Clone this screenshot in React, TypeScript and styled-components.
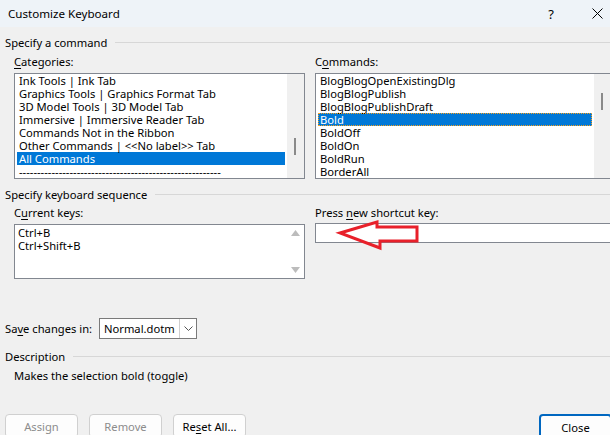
import React from "react";
import styled, {createGlobalStyle} from "styled-components";

const Global = createGlobalStyle`
html, body {
  margin: 0;
  padding: 0;
  background: #f0f0f0;
}
#root {
  width: 610px;
  height: 435px;
  overflow: hidden;
}
`

const Dialog = styled.div`
width: 620px;
height: 435px;
background: #f0f0f0;
font-family: "Noto Sans", "Segoe UI", sans-serif;
font-size: 11.2px;
color: #000;
display: flex;
flex-direction: column;
`

const TitleBar = styled.div`
height: 27px;
background: #eef3f8;
display: flex;
align-items: center;
padding: 0 0 0 8px;
font-size: 12px;
`
const Title = styled.div`
flex: 1;
line-height: 15px;
font-size: 11.6px;
`
const TitleButton = styled.div`
width: 46px;
height: 27px;
display: flex;
align-items: center;
justify-content: center;
font-size: 13px;
`

const Body = styled.div`
flex: 1;
padding: 0 8px 0 5px;
display: flex;
flex-direction: column;
`

const GroupHeader = styled.div<{top: number}>`
display: flex;
align-items: center;
gap: 8px;
margin-top: ${p => p.top}px;
line-height: 15px;
&::after{
  content: '';
  flex: 1;
  height: 1px;
  background: #d7d7d7;
}
`

const Columns = styled.div<{top: number}>`
display: grid;
grid-template-columns: 291px 1fr;
column-gap: 10px;
padding-left: 9px;
margin-top: ${p => p.top}px;
`
const Label = styled.div`
line-height: 15px;
height: 15px;
margin-bottom: 4px;
white-space: nowrap;
u{
  text-decoration-thickness: 1px;
  text-underline-offset: 2px;
}
`

const ListBox = styled.div`
position: relative;
height: 104px;
border: 1px solid #828790;
background: #fff;
display: flex;
overflow: hidden;
`
const ListItems = styled.div`
flex: 1;
padding: 0 2px;
overflow: hidden;
`
const Item = styled.div<{selected?: boolean}>`
height: 13px;
line-height: 13px;
padding-left: 2px;
white-space: nowrap;
background: ${p => p.selected ? '#0078d7' : 'transparent'};
color: ${p => p.selected ? '#fff' : '#000'};
`
const FocusItem = styled(Item)`
outline: 1px dotted #f7a01c;
outline-offset: -1px;
`
const ScrollGutter = styled.div`
width: 17px;
background: #f0f0f0;
position: relative;
`
const Thumb = styled.div<{from: number, size: number}>`
position: absolute;
left: 7px;
top: ${p => p.from}px;
width: 2px;
height: ${p => p.size}px;
background: #8a8a8a;
`

const KeysBox = styled.div`
height: 53px;
border: 1px solid #828790;
background: #fff;
display: flex;
`
const KeysText = styled.div`
flex: 1;
padding: 1px 3px;
line-height: 13px;
`
const ArrowGutter = styled.div`
width: 17px;
display: flex;
flex-direction: column;
justify-content: space-between;
align-items: center;
padding: 5px 0 5px;
`

const ShortcutWrap = styled.div`
position: relative;
margin-top: -1px;
`
const ShortcutInput = styled.div`
height: 18px;
border: 1px solid #828790;
background: #fff;
`
const Arrow = styled.svg`
position: absolute;
left: 0;
top: 0;
overflow: visible;
`

const SaveRow = styled.div`
display: flex;
align-items: center;
margin-top: 39px;
`
const SaveLabel = styled(Label)`
width: 94px;
margin-bottom: 0;
`
const Select = styled.div`
width: 96px;
height: 19px;
border: 1px solid #7a7a7a;
background: #fff;
display: flex;
`
const SelectValue = styled.div`
flex: 1;
padding-left: 4px;
line-height: 19px;
`
const SelectDrop = styled.div`
width: 16px;
border-left: 1px solid #cfcfcf;
display: flex;
align-items: center;
justify-content: center;
`

const Description = styled.div`
margin-top: 4px;
padding-left: 9px;
line-height: 15px;
`

const ButtonRow = styled.div`
display: flex;
gap: 11px;
margin-top: 31px;
`
const Button = styled.div<{disabled?: boolean, primary?: boolean}>`
width: ${p => p.primary ? 69 : 71}px;
height: 22px;
border: ${p => p.primary ? '2px solid #0067c0' : '1px solid #d0d0d0'};
border-radius: 4px;
background: #fdfdfd;
color: ${p => p.disabled ? '#8c8c8c' : '#000'};
display: flex;
align-items: center;
justify-content: center;
u{
  text-decoration-thickness: 1px;
  text-underline-offset: 2px;
}
`
const Spacer = styled.div`
flex: 1;
`

const categories = [
    'Ink Tools | Ink Tab',
    'Graphics Tools | Graphics Format Tab',
    '3D Model Tools | 3D Model Tab',
    'Immersive | Immersive Reader Tab',
    'Commands Not in the Ribbon',
    'Other Commands | <<No label>> Tab',
]

const commands = ['BlogBlogOpenExistingDlg', 'BlogBlogPublish', 'BlogBlogPublishDraft']
const commandsAfter = ['BoldOff', 'BoldOn', 'BoldRun', 'BorderAll']

const Triangle = ({up}: {up?: boolean}) =>
    <svg width="9" height="6" viewBox="0 0 9 6">
        <path d={up ? "M0 6 L4.5 0 L9 6 Z" : "M0 0 L4.5 6 L9 0 Z"} fill="#bcbcbc"/>
    </svg>

export default function App() {
    return <>
        <Global/>
        <Dialog>
            <TitleBar>
                <Title>Customize Keyboard</Title>
                <TitleButton>?</TitleButton>
                <TitleButton>
                    <svg width="11" height="11" viewBox="0 0 11 11">
                        <path d="M0.5 0.5 L10.5 10.5 M10.5 0.5 L0.5 10.5" stroke="#000" strokeWidth="1"/>
                    </svg>
                </TitleButton>
            </TitleBar>
            <Body>
                <GroupHeader top={8}>Specify a command</GroupHeader>
                <Columns top={4}>
                    <div>
                        <Label><u>C</u>ategories:</Label>
                        <ListBox>
                            <ListItems>
                                {categories.map(c => <Item key={c}>{c}</Item>)}
                                <Item selected>All Commands</Item>
                                <Item>{'-'.repeat(56)}</Item>
                            </ListItems>
                            <ScrollGutter><Thumb from={64} size={17}/></ScrollGutter>
                        </ListBox>
                    </div>
                    <div>
                        <Label>C<u>o</u>mmands:</Label>
                        <ListBox>
                            <ListItems>
                                {commands.map(c => <Item key={c}>{c}</Item>)}
                                <FocusItem selected>Bold</FocusItem>
                                {commandsAfter.map(c => <Item key={c}>{c}</Item>)}
                            </ListItems>
                            <ScrollGutter><Thumb from={19} size={17}/></ScrollGutter>
                        </ListBox>
                    </div>
                </Columns>
                <GroupHeader top={8}>Specify keyboard sequence</GroupHeader>
                <Columns top={3}>
                    <div>
                        <Label>C<u>u</u>rrent keys:</Label>
                        <KeysBox>
                            <KeysText>
                                <div>Ctrl+B</div>
                                <div>Ctrl+Shift+B</div>
                            </KeysText>
                            <ArrowGutter><Triangle up/><Triangle/></ArrowGutter>
                        </KeysBox>
                    </div>
                    <div>
                        <Label>Press <u>n</u>ew shortcut key:</Label>
                        <ShortcutWrap>
                            <ShortcutInput/>
                            <Arrow width="110" height="30">
                                <path d="M25 10 L62 -1 L62 4 L102 4 L102 18 L65 18 L65 25 Z"
                                      fill="none" stroke="#e8202a" strokeWidth="3" strokeLinejoin="miter"/>
                            </Arrow>
                        </ShortcutWrap>
                    </div>
                </Columns>
                <SaveRow>
                    <SaveLabel>Sa<u>v</u>e changes in:</SaveLabel>
                    <Select>
                        <SelectValue>Normal.dotm</SelectValue>
                        <SelectDrop>
                            <svg width="9" height="5" viewBox="0 0 9 5">
                                <path d="M0.5 0.5 L4.5 4.5 L8.5 0.5" fill="none" stroke="#555" strokeWidth="1"/>
                            </svg>
                        </SelectDrop>
                    </Select>
                </SaveRow>
                <GroupHeader top={10}>Description</GroupHeader>
                <Description>Makes the selection bold (toggle)</Description>
                <ButtonRow>
                    <Button disabled>Assign</Button>
                    <Button disabled>Remove</Button>
                    <Button>Re<u>s</u>et All...</Button>
                    <Spacer/>
                    <Button primary>Close</Button>
                </ButtonRow>
            </Body>
        </Dialog>
    </>
}
